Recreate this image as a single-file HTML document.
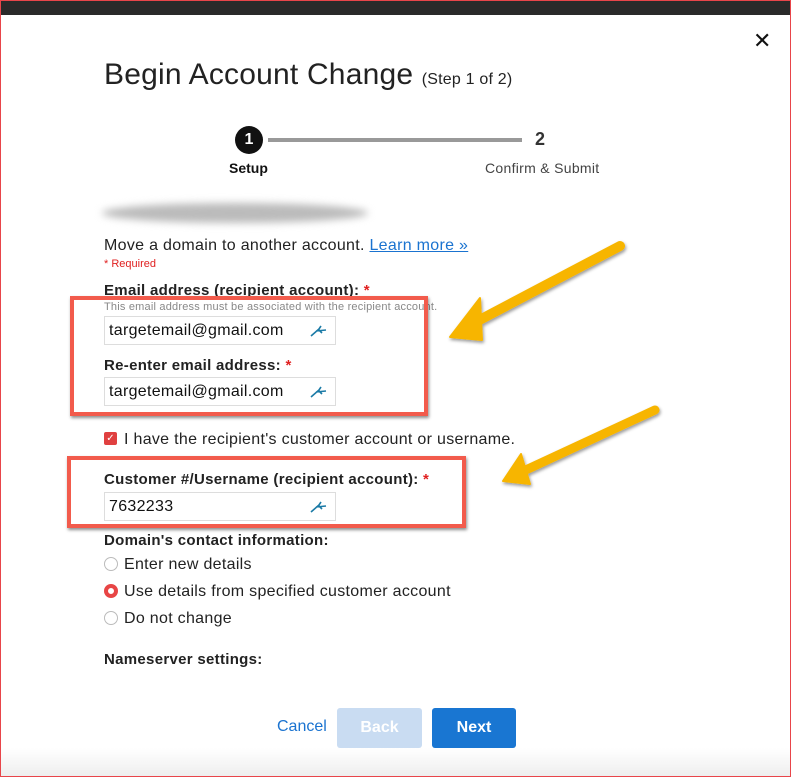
<!DOCTYPE html>
<html><head><meta charset="utf-8">
<style>
*{box-sizing:border-box;margin:0;padding:0}
html,body{width:791px;height:777px;overflow:hidden;background:#fff;font-family:"Liberation Sans",Arial,sans-serif;color:#111}
.frame{position:absolute;left:0;top:0;width:791px;height:777px;border:1px solid #e8454a}
.topbar{position:absolute;left:1px;top:1px;width:789px;height:14px;background:#2a2a2a}
.abs{position:absolute;white-space:nowrap}
.close{left:753px;top:28px;font-size:22px;color:#111}
h1{position:absolute;left:104px;top:58px;font-size:30px;font-weight:normal;color:#222;white-space:nowrap;letter-spacing:0.2px}
h1 small{font-size:16px;letter-spacing:0.2px}
.circle{left:235px;top:126px;width:28px;height:28px;border-radius:50%;background:#111;color:#fff;font-weight:bold;font-size:16px;text-align:center;line-height:28px}
.line{left:268px;top:138px;width:254px;height:4px;background:#999}
.lbl{font-size:15px;font-weight:bold;color:#222;letter-spacing:0.3px}
.hint{font-size:11px;color:#888;letter-spacing:0.2px}
.input{position:absolute;left:104px;width:232px;height:29px;border:1px solid #ddd;font-size:16px;padding:5px 0 0 4px;color:#111;background:#fff;letter-spacing:0.3px}
.input svg{position:absolute;right:7px;top:8px}
.req{color:#e02020}
.box{position:absolute;border:4px solid #f25b4c;box-shadow:1px 2px 3px rgba(0,0,0,.45)}
.radio{position:absolute;left:104px;width:14px;height:14px;border-radius:50%;border:1px solid #bbb;background:#fff}
.opt{font-size:16px;color:#222;letter-spacing:0.3px}
.btn{position:absolute;top:708px;height:40px;border-radius:3px;font-size:16px;font-weight:bold;color:#fff;text-align:center;line-height:40px}
</style></head><body>
<div class="frame"></div>
<div class="topbar"></div>
<div class="abs" style="left:1px;top:748px;width:789px;height:28px;background:linear-gradient(#fff,#eee)"></div>
<div class="abs close">✕</div>
<h1>Begin Account Change <small>(Step 1 of 2)</small></h1>
<div class="abs circle">1</div>
<div class="abs line"></div>
<div class="abs" style="left:535px;top:129px;font-size:18px;font-weight:bold;color:#333">2</div>
<div class="abs" style="left:229px;top:160px;font-size:14px;font-weight:bold">Setup</div>
<div class="abs" style="left:485px;top:160px;font-size:14px;color:#444;letter-spacing:0.3px">Confirm &amp; Submit</div>
<div class="abs" style="left:102px;top:203px;width:266px;height:20px;border-radius:50%;background:#bbb;filter:blur(4px)"></div>
<div class="abs" style="left:104px;top:237px;font-size:16px;color:#222;letter-spacing:0.3px">Move a domain to another account. <span style="color:#1a73d0;text-decoration:underline">Learn more »</span></div>
<div class="abs" style="left:104px;top:258px;font-size:11px;color:#e02020">* Required</div>

<div class="abs lbl" style="left:104px;top:282px">Email address (recipient account): <span class="req">*</span></div>
<div class="abs hint" style="left:104px;top:301px">This email address must be associated with the recipient account.</div>
<div class="input" style="top:316px">targetemail@gmail.com<svg width="18" height="12" viewBox="0 0 18 12"><path d="M1 11 L9 4 L11 1 M6 6 L16 5 M9 5 L12 8" stroke="#1a7aa6" stroke-width="1.6" fill="none"/></svg></div>
<div class="abs lbl" style="left:104px;top:357px">Re-enter email address: <span class="req">*</span></div>
<div class="input" style="top:377px">targetemail@gmail.com<svg width="18" height="12" viewBox="0 0 18 12"><path d="M1 11 L9 4 L11 1 M6 6 L16 5 M9 5 L12 8" stroke="#1a7aa6" stroke-width="1.6" fill="none"/></svg></div>
<div class="box" style="left:70px;top:296px;width:358px;height:120px"></div>

<div class="abs" style="left:104px;top:432px;width:13px;height:13px;border-radius:2px;background:#e04040;color:#fff;font-size:10px;line-height:13px;text-align:center">✓</div>
<div class="abs opt" style="left:124px;top:431px">I have the recipient's customer account or username.</div>

<div class="abs lbl" style="left:104px;top:471px">Customer #/Username (recipient account): <span class="req">*</span></div>
<div class="input" style="top:492px">7632233<svg width="18" height="12" viewBox="0 0 18 12"><path d="M1 11 L9 4 L11 1 M6 6 L16 5 M9 5 L12 8" stroke="#1a7aa6" stroke-width="1.6" fill="none"/></svg></div>
<div class="box" style="left:67px;top:456px;width:399px;height:72px"></div>

<div class="abs lbl" style="left:104px;top:532px">Domain's contact information:</div>
<div class="radio" style="top:557px"></div><div class="abs opt" style="left:124px;top:556px">Enter new details</div>
<div class="radio" style="top:584px;border:4px solid #e84545"></div><div class="abs opt" style="left:124px;top:583px">Use details from specified customer account</div>
<div class="radio" style="top:611px"></div><div class="abs opt" style="left:124px;top:610px">Do not change</div>
<div class="abs lbl" style="left:104px;top:651px">Nameserver settings:</div>

<div class="abs" style="left:277px;top:718px;font-size:16px;color:#1a73d0">Cancel</div>
<div class="btn" style="left:337px;width:85px;background:#c9dcf2">Back</div>
<div class="btn" style="left:432px;width:84px;background:#1976d2">Next</div>
<div class="abs" style="left:0;top:776px;width:791px;height:1px;background:#e8454a"></div>

<svg class="abs" style="left:0;top:0" width="791" height="777">
<defs><filter id="sh"><feDropShadow dx="1" dy="2" stdDeviation="1.5" flood-color="#000" flood-opacity="0.4"/></filter></defs>
<g filter="url(#sh)" fill="#f7b500" stroke="#f7b500" stroke-linejoin="round" stroke-linecap="round">
<line x1="620" y1="246" x2="470" y2="325" stroke-width="10"/>
<polygon points="450,337 480,298 482,340" stroke-width="2"/>
<line x1="655" y1="410" x2="515" y2="475" stroke-width="9"/>
<polygon points="503,481 521,454 530,484" stroke-width="2"/>
</g>
</svg>
</body></html>
